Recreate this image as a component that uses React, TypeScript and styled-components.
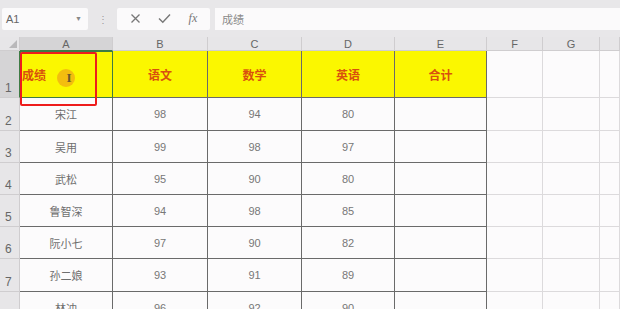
import React from "react";
import styled, { createGlobalStyle, css } from "styled-components";

const Global = createGlobalStyle`
  html, body { margin: 0; padding: 0; background: #fcfbfc; overflow: hidden; }
  body { font-family: "Noto Sans CJK SC", "Noto Sans", sans-serif; }
`;

const Page = styled.div`
  width: 620px;
  height: 309px;
  display: flex;
  flex-direction: column;
  background: #fcfbfc;
  overflow: hidden;
`;

const Toolbar = styled.div`
  height: 37px;
  flex: none;
  display: flex;
  align-items: center;
  background: #e8e7e9;
  padding: 0 0 0 2px;
  box-sizing: border-box;
`;

const NameBox = styled.div`
  width: 86px;
  height: 22px;
  background: #fbfafb;
  border-radius: 2px;
  display: flex;
  align-items: center;
  justify-content: space-between;
  padding: 0 6px 0 4px;
  box-sizing: border-box;
  font-family: "Liberation Sans", sans-serif;
  font-size: 11px;
  color: #666;
`;

const Caret = styled.span`
  font-size: 7px;
  color: #888;
`;

const Dots = styled.div`
  width: 29px;
  display: flex;
  justify-content: center;
  color: #999;
  font-size: 10px;
`;

const FxBox = styled.div`
  width: 93px;
  height: 22px;
  background: #fbfafb;
  border-radius: 2px;
  display: flex;
  align-items: center;
  justify-content: space-around;
  padding: 0 4px;
  box-sizing: border-box;
  color: #777;
`;

const FxText = styled.span`
  font-family: "Liberation Serif", serif;
  font-style: italic;
  font-size: 12px;
  color: #777;
`;

const FormulaInput = styled.div`
  flex: 1;
  height: 22px;
  margin-left: 5px;
  background: #fbfafb;
  display: flex;
  align-items: center;
  padding-left: 7px;
  font-size: 11px;
  color: #8a8a8a;
`;

const Sheet = styled.div`
  flex: none;
  display: grid;
  grid-template-columns: 20px 93px 95px 94px 93px 92px 56px 57px 1fr;
  grid-template-rows: 14px 47px 33px 32px 32px 32px 32px 33px 33px;
  position: relative;
`;

type CellProps = {
  $kind: "corner" | "colhead" | "rowhead" | "data" | "empty";
  $sel?: boolean;
  $yellow?: boolean;
  $tb?: boolean;
};

const Cell = styled.div<CellProps>`
  box-sizing: border-box;
  display: flex;
  align-items: center;
  justify-content: center;
  overflow: hidden;
  border-right: 1px solid #dcdadc;
  border-bottom: 1px solid #dcdadc;
  font-size: 11px;
  color: #6e6e6e;
  ${(p) =>
    (p.$kind === "colhead" || p.$kind === "corner") &&
    css`
      background: ${p.$sel ? "#d5d4d6" : "#e7e6e8"};
      border-right-color: #cfcdcf;
      border-bottom: 1px solid ${p.$sel ? "#3e7b45" : "#cfcdcf"};
      font-family: "Liberation Sans", sans-serif;
      font-size: 11px;
      color: #666;
      padding-top: 1px;
    `}
  ${(p) =>
    p.$kind === "corner" &&
    css`
      justify-content: flex-end;
      align-items: flex-end;
      padding: 0 2px 2px 0;
    `}
  ${(p) =>
    p.$kind === "rowhead" &&
    css`
      background: ${p.$sel ? "#d5d4d6" : "#e7e6e8"};
      border-bottom-color: #cfcdcf;
      border-right: 1px solid ${p.$sel ? "#3e7b45" : "#cfcdcf"};
      justify-content: flex-start;
      align-items: flex-end;
      padding: 0 0 2px 5px;
      font-family: "Liberation Sans", sans-serif;
      font-size: 12px;
      color: #666;
    `}
  ${(p) =>
    p.$tb &&
    css`
      border-right: 1px solid #6a6a6a;
      border-bottom: 1px solid #6a6a6a;
    `}
  ${(p) =>
    p.$yellow &&
    css`
      background: #fbf700;
      color: #d9500e;
      font-weight: 700;
      font-size: 12px;
    `}
`;

const NumText = styled.span`
  font-family: "Liberation Sans", sans-serif;
  font-size: 11px;
  color: #777;
`;

const LeftText = styled.span`
  margin-right: auto;
  padding-left: 2px;
`;

const CornerTri = styled.div`
  width: 0;
  height: 0;
  border-left: 8px solid transparent;
  border-bottom: 8px solid #b9b8ba;
`;

const ActiveBox = styled.div`
  position: absolute;
  left: 20px;
  top: 14px;
  width: 93px;
  height: 47px;
  border: 1px solid #3e7b45;
  box-sizing: border-box;
  pointer-events: none;
`;

const RedBox = styled.div`
  position: absolute;
  left: 20px;
  top: 15px;
  width: 77px;
  height: 54px;
  border: 2px solid #ee1c1c;
  border-radius: 2px;
  box-sizing: border-box;
  pointer-events: none;
`;

const CursorDot = styled.div`
  position: absolute;
  left: 57px;
  top: 32px;
  width: 18px;
  height: 18px;
  border-radius: 50%;
  background: rgba(240, 170, 20, 0.75);
  display: flex;
  align-items: center;
  justify-content: center;
  font-family: "Liberation Serif", serif;
  font-size: 13px;
  font-weight: 700;
  color: #6b5a2a;
  padding-left: 6px;
  box-sizing: border-box;
`;

const cols = ["A", "B", "C", "D", "E", "F", "G", ""];
const heads = ["成绩", "语文", "数学", "英语", "合计"];
const rows: [string, string, string, string][] = [
  ["宋江", "98", "94", "80"],
  ["吴用", "99", "98", "97"],
  ["武松", "95", "90", "80"],
  ["鲁智深", "94", "98", "85"],
  ["阮小七", "97", "90", "82"],
  ["孙二娘", "93", "91", "89"],
  ["林冲", "96", "92", "90"],
];

export default function App() {
  return (
    <Page>
      <Global />
      <Toolbar>
        <NameBox>
          <span>A1</span>
          <Caret>▼</Caret>
        </NameBox>
        <Dots>⋮</Dots>
        <FxBox>
          <svg width="11" height="11" viewBox="0 0 11 11">
            <path d="M1.5 1.5 L9.5 9.5 M9.5 1.5 L1.5 9.5" stroke="#777" strokeWidth="1.3" fill="none" />
          </svg>
          <svg width="13" height="11" viewBox="0 0 13 11">
            <path d="M1 5.5 L4.8 9.3 L12 1.5" stroke="#777" strokeWidth="1.4" fill="none" />
          </svg>
          <FxText>fx</FxText>
        </FxBox>
        <FormulaInput>成绩</FormulaInput>
      </Toolbar>
      <Sheet>
        <Cell $kind="corner">
          <CornerTri />
        </Cell>
        {cols.map((c, i) => (
          <Cell key={"h" + i} $kind="colhead" $sel={i === 0}>
            {c}
          </Cell>
        ))}
        <Cell $kind="rowhead" $sel>1</Cell>
        {heads.map((h, i) => (
          <Cell key={"t" + i} $kind="data" $tb $yellow>
            {i === 0 ? <LeftText>{h}</LeftText> : h}
          </Cell>
        ))}
        <Cell $kind="empty" />
        <Cell $kind="empty" />
        <Cell $kind="empty" />
        {rows.map((r, ri) => (
          <React.Fragment key={"r" + ri}>
            <Cell $kind="rowhead">{ri + 2}</Cell>
            <Cell $kind="data" $tb>{r[0]}</Cell>
            <Cell $kind="data" $tb><NumText>{r[1]}</NumText></Cell>
            <Cell $kind="data" $tb><NumText>{r[2]}</NumText></Cell>
            <Cell $kind="data" $tb><NumText>{r[3]}</NumText></Cell>
            <Cell $kind="data" $tb />
            <Cell $kind="empty" />
            <Cell $kind="empty" />
            <Cell $kind="empty" />
          </React.Fragment>
        ))}
        <ActiveBox />
        <RedBox />
        <CursorDot>I</CursorDot>
      </Sheet>
    </Page>
  );
}
